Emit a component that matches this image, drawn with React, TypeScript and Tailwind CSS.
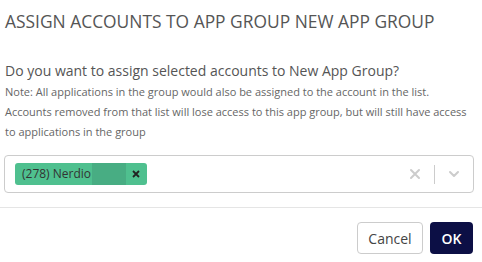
import React from "react";

const font = { fontFamily: '"Open Sans", "Noto Sans", sans-serif' };

function TagChip() {
  return (
    <div className="flex h-[22px] items-center rounded-[3px] bg-[#4fc08f] pl-[7px] pr-[7px] text-[12px] text-[#333]">
      <span>(278) Nerdio</span>
      <span className="ml-[1px] h-[22px] w-[34px] bg-[#48ad83]" />
      <svg width="8" height="8" viewBox="0 0 8 8" className="ml-[6px]">
        <path d="M1 1 L7 7 M7 1 L1 7" stroke="#222" strokeWidth="1.8" />
      </svg>
    </div>
  );
}

export default function App() {
  return (
    <div className="h-[262px] w-[482px] bg-white text-[#555]" style={font}>
      <div className="px-[5px] pt-[9px]">
        <h1 className="text-[17.4px] leading-[24px] font-normal text-[#555]">
          ASSIGN ACCOUNTS TO APP GROUP NEW APP GROUP
        </h1>
      </div>

      <div className="px-[5px] pt-[28px]">
        <p className="text-[14px] leading-[20px] text-[#555]">
          Do you want to assign selected accounts to New App Group?
        </p>
        <p className="mt-[1px] whitespace-nowrap text-[11px] leading-[20px] text-[#666]">
          Note: All applications in the group would also be assigned to the account in the list.
          <br />
          Accounts removed from that list will lose access to this app group, but will still have access
          <br />
          to applications in the group
        </p>
      </div>

      <div className="mx-[4px] mt-[13px] flex h-[38px] w-[470px] items-center rounded-[4px] border border-[#ccc] pl-[10px]">
        <TagChip />
        <div className="flex-1" />
        <svg width="12" height="12" viewBox="0 0 12 12" className="mr-[13px]">
          <path d="M2 2 L10 10 M10 2 L2 10" stroke="#ccc" strokeWidth="2" strokeLinecap="round" />
        </svg>
        <div className="h-[19px] w-px bg-[#ccc]" />
        <svg width="14" height="14" viewBox="0 0 14 14" className="mx-[12px]">
          <path d="M3 5 L7 9 L11 5" stroke="#ccc" strokeWidth="2" fill="none" strokeLinecap="round" strokeLinejoin="round" />
        </svg>
      </div>

      <div className="mt-[14px] h-px w-full bg-[#e5e5e5]" />

      <div className="flex justify-end gap-[7px] pr-[9px] pt-[14px]">
        <button className="h-[32px] w-[66px] rounded-[4px] border border-[#ccc] bg-white text-[14px] text-[#444]">
          Cancel
        </button>
        <button className="h-[32px] w-[43px] rounded-[4px] bg-[#0c0f45] text-[14px] font-semibold text-white">
          OK
        </button>
      </div>
    </div>
  );
}
